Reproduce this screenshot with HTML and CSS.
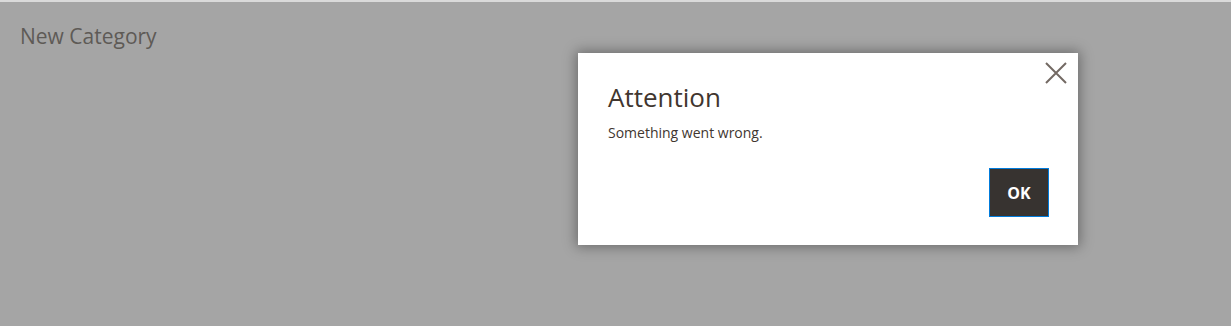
FILE: index.html
```html
<!DOCTYPE html>
<html lang="en">
<head>
    <meta charset="UTF-8">
    <meta name="viewport" content="width=device-width, initial-scale=1.0">
    <title>New Category</title>
    <link rel="stylesheet" href="styles.css">
</head>
<body>
    <div class="page">
        <h1 class="page-title">New Category</h1>
    </div>

    <aside class="modal-popup" role="dialog">
        <button class="action-close" type="button" aria-label="Close">
            <svg width="22" height="22" viewBox="0 0 22 22">
                <path d="M1 1 L21 21 M21 1 L1 21" stroke="#736963" stroke-width="2" fill="none"/>
            </svg>
        </button>
        <h2 class="modal-title">Attention</h2>
        <div class="modal-content">Something went wrong.</div>
        <footer class="modal-footer">
            <button class="action-primary" type="button">OK</button>
        </footer>
    </aside>
</body>
</html>
```

FILE: styles.css
```css
body {
    font-family: "Open Sans", sans-serif;
    background-color: #a5a5a5;
    color: #41362f;
    margin: 0;
    padding: 0;
    height: 326px;
    overflow: hidden;
}

.page {
    border-top: 2px solid #dadada;
    padding: 20px 20px 0;
}

.page-title {
    font-size: 21px;
    font-weight: 400;
    line-height: 28px;
    color: #5e5a56;
    margin: 0;
}

.modal-popup {
    position: absolute;
    top: 53px;
    left: 578px;
    width: 500px;
    box-sizing: border-box;
    background-color: white;
    box-shadow: 0 0 12px 2px rgba(0, 0, 0, 0.35);
    padding: 29px 29px 28px 30px;
}

.action-close {
    position: absolute;
    top: 9px;
    right: 11px;
    width: 22px;
    height: 22px;
    padding: 0;
    border: none;
    background: transparent;
    cursor: pointer;
    display: flex;
}

.modal-title {
    font-size: 26px;
    font-weight: 400;
    line-height: 31px;
    margin: 0 0 10px;
    color: #41362f;
}

.modal-content {
    font-size: 14px;
    line-height: 20px;
}

.modal-footer {
    display: flex;
    justify-content: flex-end;
    margin-top: 25px;
}

.action-primary {
    font-family: "Open Sans", sans-serif;
    font-size: 16px;
    font-weight: 700;
    color: white;
    background-color: #373330;
    border: 1px solid #007bdb;
    width: 60px;
    height: 49px;
    padding: 0;
    cursor: pointer;
}
```
